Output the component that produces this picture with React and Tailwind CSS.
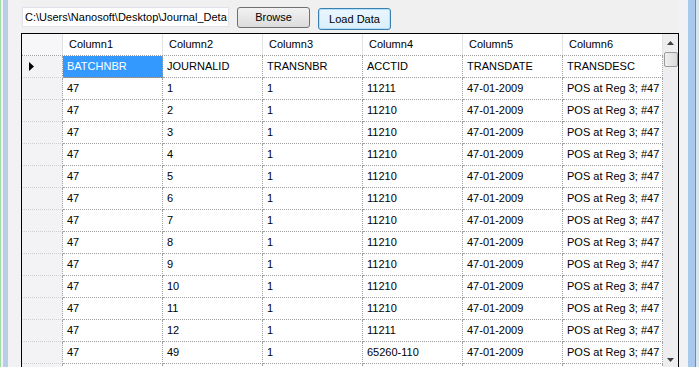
const rows = [
  ["1", "11211"],
  ["2", "11210"],
  ["3", "11210"],
  ["4", "11210"],
  ["5", "11210"],
  ["6", "11210"],
  ["7", "11210"],
  ["8", "11210"],
  ["9", "11210"],
  ["10", "11210"],
  ["11", "11210"],
  ["12", "11211"],
  ["49", "65260-110"],
].map(([jid, acct]) => ["47", jid, "1", acct, "47-01-2009", "POS at Reg 3; #47"]);

const columns = ["Column1", "Column2", "Column3", "Column4", "Column5", "Column6"];
const titles = ["BATCHNBR", "JOURNALID", "TRANSNBR", "ACCTID", "TRANSDATE", "TRANSDESC"];

function RowHeader({ current }) {
  return (
    <div className="w-[41px] h-full shrink-0 bg-[#f3f3f6] border-r border-b border-dotted border-r-[#a0a0a0] border-b-[#d0d0d0] flex items-center pl-[7px]">
      {current && (
        <svg width="5" height="9" viewBox="0 0 5 9">
          <path d="M0 0 L5 4.5 L0 9 Z" fill="#000" />
        </svg>
      )}
    </div>
  );
}

function Row({ cells, current, selectFirst }) {
  return (
    <div className="flex h-[22px] shrink-0">
      <RowHeader current={current} />
      {cells.map((c, i) => (
        <div
          key={i}
          className={
            "w-[100px] h-full shrink-0 border-r border-b border-dotted border-[#a0a0a0] pl-[4px] flex items-center whitespace-nowrap overflow-hidden " +
            (selectFirst && i === 0 ? "bg-[#3399ff] text-white" : "bg-white text-black")
          }
        >
          {c}
        </div>
      ))}
    </div>
  );
}

export default function App() {
  return (
    <div className="w-[699px] h-[367px] overflow-hidden bg-[#f0f0f0] flex text-[11px] text-black" style={{ fontFamily: '"Liberation Sans", Arial, sans-serif' }}>
      {/* left window edge */}
      <div className="w-[21px] h-full shrink-0 flex">
        <div className="w-px h-full bg-[#9fdc9f]" />
        <div className="w-[2px] h-full bg-[#eef2f8]" />
        <div className="w-[5px] h-full bg-[#b9cde6]" />
        <div className="flex-1 h-full bg-[#f2f2f4]" />
      </div>

      <div className="w-[658px] h-full shrink-0 flex flex-col">
        {/* toolbar */}
        <div className="h-[33px] shrink-0 flex items-start pt-[7px] pl-px">
          <div className="w-[207px] h-[20px] bg-white border border-[#e2e3ea] flex items-center pl-[2px] overflow-hidden whitespace-nowrap">
            C:\Users\Nanosoft\Desktop\Journal_Deta
          </div>
          <button className="ml-[8px] w-[73px] h-[21px] rounded-[3px] border border-[#707070] bg-gradient-to-b from-[#f2f2f2] to-[#dcdcdc] flex items-center justify-center">
            Browse
          </button>
          <button className="ml-[8px] mt-px w-[73px] h-[22px] rounded-[3px] border border-[#3c7fb1] bg-gradient-to-b from-[#eaf6fd] to-[#d9f0fc] shadow-[inset_0_0_0_1px_#b3e0f9] flex items-center justify-center">
            Load Data
          </button>
        </div>

        {/* data grid */}
        <div className="flex-1 min-h-0 flex border-l border-t border-r border-black bg-[#aaaaaa] overflow-hidden">
          <div className="w-[641px] shrink-0 flex flex-col">
            <div className="flex h-[22px] shrink-0 bg-white border-b border-dotted border-[#a0a0a0]">
              <div className="w-[41px] h-full shrink-0 bg-[#f7f7f9] border-r border-[#e0e0e0]" />
              {columns.map((c) => (
                <div key={c} className="w-[100px] h-full shrink-0 border-r border-[#e3e3e3] pl-[6px] flex items-center">
                  {c}
                </div>
              ))}
            </div>
            <Row cells={titles} current selectFirst />
            {rows.map((r, i) => (
              <Row key={i} cells={r} />
            ))}
            <Row cells={["", "", "", "", "", ""]} />
          </div>

          {/* vertical scrollbar */}
          <div className="w-[15px] shrink-0 bg-[#eeeef0] flex flex-col items-center">
            <div className="h-[18px] w-full flex items-center justify-center">
              <svg width="7" height="4" viewBox="0 0 7 4">
                <path d="M0 4 L3.5 0 L7 4 Z" fill="#404040" />
              </svg>
            </div>
            <div className="w-[14px] h-[15px] rounded-[2px] border border-[#9a9a9a] bg-gradient-to-r from-[#f0f0f0] to-[#dadada]" />
            <div className="flex-1" />
            <div className="h-[14px] w-full flex items-start justify-center pt-[5px]">
              <svg width="7" height="4" viewBox="0 0 7 4">
                <path d="M0 0 L3.5 4 L7 0 Z" fill="#404040" />
              </svg>
            </div>
          </div>
        </div>
      </div>

      {/* right window edge */}
      <div className="flex-1 h-full flex">
        <div className="w-[9px] h-full bg-[#f2f2f4]" />
        <div className="w-[7px] h-full bg-[#a9c9ec]" />
        <div className="w-px h-full bg-[#6b8fb8]" />
        <div className="flex-1 h-full bg-[#dbe6f3]" />
      </div>
    </div>
  );
}
